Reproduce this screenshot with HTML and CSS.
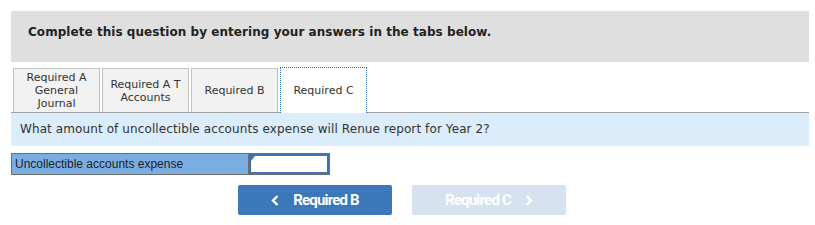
FILE: index.html
```html
<!DOCTYPE html>
<html lang="en">
<head>
    <meta charset="UTF-8">
    <title>Required C</title>
    <link rel="stylesheet" href="styles.css">
</head>
<body>

    <div class="intro">
        <p>Complete this question by entering your answers in the tabs below.</p>
    </div>

    <!-- Tabs -->
    <div class="tabs">
        <div class="tab">Required A<br>General<br>Journal</div>
        <div class="tab">Required A T<br>Accounts</div>
        <div class="tab">Required B</div>
        <div class="tab active">Required C</div>
    </div>

    <div class="question">What amount of uncollectible accounts expense will Renue report for Year 2?</div>

    <div class="answer-row">
        <div class="answer-label">Uncollectible accounts expense</div>
        <div class="answer-input"><input type="text"></div>
    </div>

    <div class="nav">
        <button class="nav-btn prev">
            <svg class="chev" width="8" height="11" viewBox="0 0 8 11"><polyline points="6.5,1 2,5.5 6.5,10" fill="none" stroke="#fff" stroke-width="2.4"/></svg>
            <span>Required B</span>
        </button>
        <button class="nav-btn next" disabled>
            <span>Required C</span>
            <svg class="chev" width="8" height="11" viewBox="0 0 8 11"><polyline points="1.5,1 6,5.5 1.5,10" fill="none" stroke="#fff" stroke-width="2.4"/></svg>
        </button>
    </div>

</body>
</html>
```

FILE: styles.css
```css
body {
    margin: 0;
    padding: 11px 6px 0 11px;
    font-family: "DejaVu Sans", Verdana, sans-serif;
    color: #222;
    background: #fff;
}

/* Grey instruction box */
.intro {
    background-color: #dfdfdf;
    height: 51px;
    padding: 0 17px;
}

.intro p {
    margin: 0;
    padding-top: 14px;
    font-size: 12px;
    font-weight: bold;
    letter-spacing: 0.05px;
}

/* Tabs */
.tabs {
    display: flex;
    gap: 2px;
    margin-top: 6px;
    padding-left: 2px;
    border-bottom: 1px solid #a0a0a0;
    height: 44px;
}

.tab {
    width: 85px;
    border: 1px solid #c2c2c2;
    border-bottom: none;
    background-color: #f2f2f2;
    font-size: 11px;
    line-height: 13px;
    color: #333;
    text-align: center;
    display: flex;
    align-items: center;
    justify-content: center;
}

.tab.active {
    background-color: #fff;
    border: 1px dotted #2f6fba;
    border-bottom: none;
    height: 45px;
    margin-top: -1px;
}

/* Question bar */
.question {
    background-color: #dbecfa;
    height: 33px;
    line-height: 33px;
    padding-left: 9px;
    font-size: 12px;
    letter-spacing: 0.1px;
    color: #333;
}

/* Answer row */
.answer-row {
    display: flex;
    margin-top: 7px;
    width: 319px;
    height: 22px;
    border: 1px solid #6e6e6e;
    box-sizing: border-box;
}

.answer-label {
    width: 233px;
    background-color: #7aaee3;
    border-right: 1px solid #6e6e6e;
    font-family: "Liberation Sans", Arial, sans-serif;
    font-size: 12px;
    line-height: 20px;
    padding-left: 3px;
    color: #222;
}

.answer-input {
    flex: 1;
    position: relative;
}

.answer-input input {
    display: block;
    width: 100%;
    height: 100%;
    box-sizing: border-box;
    border: 2px solid #3f72b3;
    outline: none;
    margin: 0;
    padding: 0;
    background: #fff;
}

/* little blue corner flag */
.answer-input::before {
    content: "";
    position: absolute;
    top: 2px;
    left: 2px;
    width: 0;
    height: 0;
    border-top: 5px solid #3f72b3;
    border-right: 4px solid transparent;
}

/* Navigation buttons */
.nav {
    display: flex;
    gap: 20px;
    margin-top: 10px;
    padding-left: 227px;
}

.nav-btn {
    width: 154px;
    height: 30px;
    border: none;
    border-radius: 2px;
    display: flex;
    align-items: center;
    justify-content: center;
    gap: 14px;
    padding: 0;
    font-family: Roboto, "Liberation Sans", sans-serif;
    font-weight: bold;
    font-size: 15px;
    letter-spacing: -0.8px;
    color: #fff;
}

.nav-btn.prev {
    background-color: #3b77b9;
}

.nav-btn.next {
    background-color: #d6e2ef;
}
```
